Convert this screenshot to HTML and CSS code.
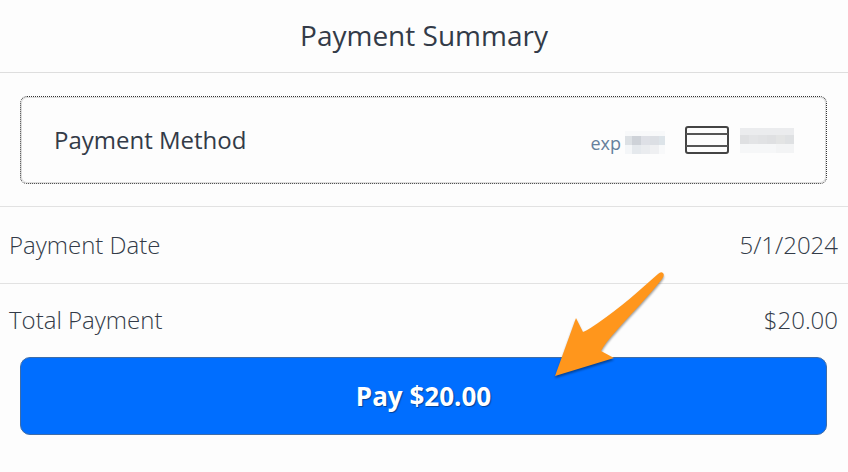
FILE: index.html
```html
<!DOCTYPE html>
<html lang="en">
<head>
    <meta charset="UTF-8">
    <meta name="viewport" content="width=device-width, initial-scale=1.0">
    <title>Payment Summary</title>
    <link rel="stylesheet" href="styles.css">
</head>
<body>
    <main class="summary">
        <header class="summary-header">
            <h1>Payment Summary</h1>
        </header>

        <section class="method-section">
            <button type="button" class="method">
                <span class="method-label">Payment Method</span>
                <span class="method-exp">
                    <span>exp</span>
                    <!-- hidden expiry date -->
                    <svg width="40" height="23" viewBox="0 0 40 23" shape-rendering="crispEdges" aria-hidden="true">
                        <path fill="#f8f9fa" d="M0 0h40v5H0z"/>
                        <path fill="#dde1e5" d="M0 5h7v9H0z"/>
                        <path fill="#ced2d8" d="M7 5h9v9H7z"/>
                        <path fill="#dee0e6" d="M16 5h9v9h-9z"/>
                        <path fill="#dcdfe4" d="M25 5h9v9h-9z"/>
                        <path fill="#dde4e9" d="M34 5h6v9h-6z"/>
                        <path fill="#f4f6f8" d="M0 14h7v9H0z"/>
                        <path fill="#e5e9ed" d="M7 14h9v9H7z"/>
                        <path fill="#eaecef" d="M16 14h9v9h-9z"/>
                        <path fill="#eff0f2" d="M25 14h9v9h-9z"/>
                        <path fill="#f8f9fa" d="M34 14h6v9h-6z"/>
                    </svg>
                </span>
                <svg class="card-icon" width="44" height="28" viewBox="0 0 44 28" fill="none" aria-hidden="true">
                    <rect x="1" y="1" width="42" height="26" rx="2" stroke="#444" stroke-width="2"/>
                    <path d="M1 8h42M1 20h42" stroke="#555" stroke-width="2"/>
                </svg>
                <!-- hidden card number -->
                <svg width="54" height="25" viewBox="0 0 54 25" shape-rendering="crispEdges" aria-hidden="true">
                    <path fill="#ebecee" d="M0 0h54v7H0z"/>
                    <path fill="#dfe0e2" d="M0 7h9v9H0z"/>
                    <path fill="#e3e4e6" d="M9 7h9v9H9z"/>
                    <path fill="#e1e2e4" d="M18 7h9v9h-9z"/>
                    <path fill="#dfe0e2" d="M27 7h9v9h-9z"/>
                    <path fill="#e3e4e4" d="M36 7h9v9h-9z"/>
                    <path fill="#dfe1e3" d="M45 7h9v9h-9z"/>
                    <path fill="#f6f7f8" d="M0 16h36v9H0z"/>
                    <path fill="#f3f4f5" d="M36 16h18v9H36z"/>
                </svg>
            </button>
        </section>

        <dl class="details">
            <div class="row">
                <dt>Payment Date</dt>
                <dd>5/1/2024</dd>
            </div>
            <div class="row">
                <dt>Total Payment</dt>
                <dd>$20.00</dd>
            </div>
        </dl>

        <div class="pay-section">
            <button type="button" class="pay">Pay $20.00</button>
            <svg class="arrow" width="116" height="112" viewBox="0 0 116 112" aria-hidden="true">
                <path fill="#ff961c" d="M4 107 25 49 32 63C37 61 42 57 47 54C70 38 88 22 107 5Q110 2 112 4Q114 6 111 10C97 28 79 46 66 61Q54 74 50 82L63 89Z"/>
            </svg>
        </div>
    </main>
</body>
</html>
```
FILE: styles.css
```css
* {
    box-sizing: border-box;
}

body {
    margin: 0;
    font-family: "Open Sans", "Noto Sans", sans-serif;
    background-color: #fdfdfd;
    color: #333b48;
}

.summary-header {
    padding: 15px 0 17px;
    border-bottom: 1px solid #dedede;
    text-align: center;
}

h1 {
    margin: 0;
    font-size: 28px;
    font-weight: 400;
    line-height: 40px;
}

.method-section {
    padding: 24px 22px 23px 21px;
    border-bottom: 1px solid #e2e2e2;
}

.method {
    display: flex;
    align-items: center;
    width: 100%;
    height: 86px;
    padding: 0 31px 0 32px;
    border: 1px solid #ddd;
    border-radius: 6px;
    outline: 1px dotted #333;
    background-color: #fdfdfd;
    color: inherit;
    font-family: inherit;
    cursor: pointer;
}

.method-label {
    flex: 1;
    padding-bottom: 2px;
    font-size: 24px;
    text-align: left;
}

.method-exp {
    display: flex;
    align-items: center;
    gap: 4px;
    padding-top: 5px;
    color: #66809c;
    font-size: 18px;
}

.card-icon {
    margin: 0 11px 0 20px;
}

.details {
    margin: 0;
    font-size: 24px;
    font-weight: 300;
    line-height: 32px;
}

.row {
    display: flex;
    justify-content: space-between;
    padding: 22px 10px 22px 9px;
    border-bottom: 1px solid #e2e2e2;
}

.row:last-child {
    padding-top: 20px;
    padding-bottom: 21px;
    border-bottom: none;
}

dd {
    margin: 0;
}

.pay-section {
    position: relative;
    padding: 0 21px 0 20px;
}

.pay {
    display: block;
    width: 100%;
    height: 78px;
    border: 1px solid #3f6da8;
    border-radius: 10px;
    background-color: #006eff;
    color: #fff;
    font-family: inherit;
    font-size: 26px;
    font-weight: 700;
    text-shadow: 1px 1px 1px rgba(0, 0, 0, 0.4);
    cursor: pointer;
}

/* pointer lying over the pay button */
.arrow {
    position: absolute;
    bottom: 54px;
    left: 65%;
    filter: drop-shadow(0 2px 1px rgba(0, 0, 0, 0.4));
    pointer-events: none;
}
```
